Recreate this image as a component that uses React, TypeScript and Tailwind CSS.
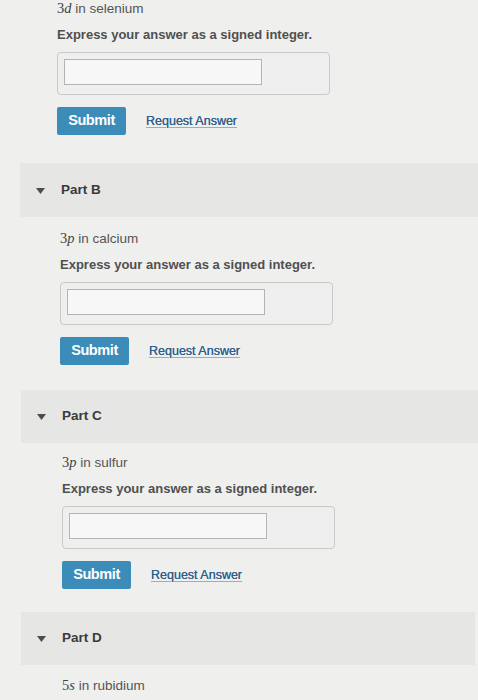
import React from "react";

interface QuestionProps {
  orbital: string;
  letter: string;
  element: string;
}

const Question: React.FC<QuestionProps> = ({ orbital, letter, element }) => (
  <div className="flex flex-col">
    <p className="h-[16px] text-[13.5px] leading-[16px] text-[#555]">
      <span className="font-['Liberation_Serif',serif] text-[14.5px] text-[#444]">
        {orbital}
        <i>{letter}</i>
      </span>{" "}
      in {element}
    </p>
    <p className="mt-[11px] h-[16px] text-[13px] font-bold leading-[16px] text-[#505050]">
      Express your answer as a signed integer.
    </p>
    <div className="mt-[9px] h-[43px] w-[273px] rounded-[4px] border border-[#c9c9c9] bg-[#efefef] pl-[6px] pt-[6px]">
      <div className="h-[26px] w-[198px] border border-[#b4b4b4] bg-[#f7f7f7]" />
    </div>
    <div className="mt-[12px] flex items-center gap-[20px]">
      <button className="h-[28px] w-[69px] rounded-[2px] bg-[#3b8cb9] text-[14.5px] font-bold tracking-[-0.4px] text-white">
        Submit
      </button>
      <a className="text-[12.5px] font-normal text-[#2f5f8c] underline decoration-[#8fb0cc] underline-offset-2 [text-shadow:0_0_0.6px_#2f5f8c]">
        Request Answer
      </a>
    </div>
  </div>
);

const PartHeader: React.FC<{ name: string; tall?: boolean }> = ({ name, tall }) => (
  <div
    className={`flex items-center bg-[#e6e6e5] pl-[16px] ${tall ? "h-[54px]" : "h-[53px]"}`}
  >
    <svg width="9" height="6" viewBox="0 0 9 6" className="mt-[1px]">
      <path d="M0 0h9L4.5 6z" fill="#4d4d4d" />
    </svg>
    <span className="ml-[16px] text-[13.5px] font-semibold text-[#3a3a3a]">
      {name}
    </span>
  </div>
);

export default function App() {
  return (
    <div className="h-[700px] w-[478px] overflow-hidden bg-[#efefee] font-['Liberation_Sans',Arial,sans-serif]">
      <div className="pl-[57px]">
        <Question orbital="3" letter="d" element="selenium" />
      </div>

      <div className="mt-[28px] pl-[20px]">
        <PartHeader name="Part B" tall />
        <div className="mt-[13px] pl-[40px]">
          <Question orbital="3" letter="p" element="calcium" />
        </div>
      </div>

      <div className="mt-[25px] pl-[21px]">
        <PartHeader name="Part C" />
        <div className="mt-[11px] pl-[41px]">
          <Question orbital="3" letter="p" element="sulfur" />
        </div>
      </div>

      <div className="mt-[23px] pl-[21px] pr-[3px]">
        <PartHeader name="Part D" />
        <div className="mt-[12px] pl-[41px]">
          <p className="h-[16px] text-[13.5px] leading-[16px] text-[#555]">
            <span className="font-['Liberation_Serif',serif] text-[14.5px] text-[#444]">
              5<i>s</i>
            </span>{" "}
            in rubidium
          </p>
        </div>
      </div>
    </div>
  );
}
